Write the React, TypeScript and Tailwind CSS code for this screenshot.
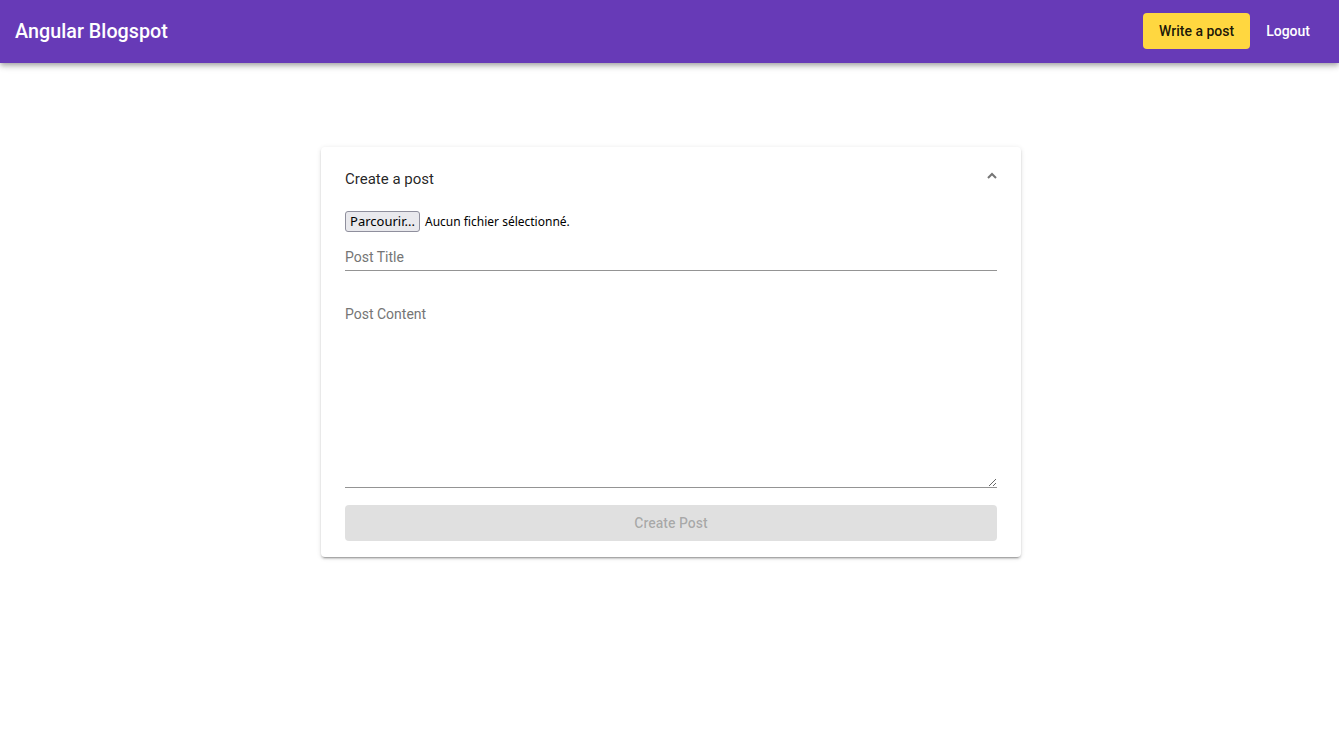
import React from 'react';

const font = { fontFamily: 'Roboto, "Helvetica Neue", sans-serif' };

const Toolbar: React.FC = () => (
  <header className="relative z-10 flex h-[63px] items-center justify-between bg-[#673ab7] pl-[15px] pr-[13px] text-white shadow-[0_2px_4px_-1px_rgba(0,0,0,0.2),0_4px_5px_0_rgba(0,0,0,0.14),0_1px_10px_0_rgba(0,0,0,0.12)]">
    <span className="text-[19.7px] font-medium tracking-[0.05px]">Angular Blogspot</span>
    <div className="-mt-px flex items-center">
      <button className="h-9 rounded-[4px] bg-[#ffd740] px-4 text-[14px] font-medium text-black/90">
        Write a post
      </button>
      <button className="h-9 px-4 text-[14px] font-medium text-white">Logout</button>
    </div>
  </header>
);

const CreatePost: React.FC = () => (
  <div className="w-[700px] rounded-[4px] bg-white shadow-[0_3px_1px_-2px_rgba(0,0,0,0.2),0_2px_2px_0_rgba(0,0,0,0.14),0_1px_5px_0_rgba(0,0,0,0.12)]">
    <div className="flex h-16 items-center justify-between px-6">
      <span className="text-[15px] text-black/[0.87]">Create a post</span>
      <svg width="14" height="14" viewBox="0 0 14 14" className="-mt-[6px] mr-[-2px]">
        <path d="M3 9 L7 5 L11 9" fill="none" stroke="#757575" strokeWidth="2" />
      </svg>
    </div>
    <div className="px-6 pb-4">
      <div className="flex h-[21px] items-center gap-[5px] text-[12px] text-black" style={{ fontFamily: '"Noto Sans", "DejaVu Sans", sans-serif' }}>
        <span className="flex h-[21px] w-[75px] items-center justify-center rounded-[3px] border border-[#8f8f9d] bg-[#e9e9ed] text-[13px] leading-none">
          Parcourir...
        </span>
        <span>Aucun fichier sélectionné.</span>
      </div>
      <input
        placeholder="Post Title"
        className="mt-3 block h-[27px] w-full border-b border-[#949494] bg-transparent text-[14px] text-black/[0.87] outline-none placeholder:text-[#757575]"
      />
      <textarea
        placeholder="Post Content"
        className="mt-[34px] block h-[183px] w-full border-b border-[#949494] bg-transparent pt-0 text-[14px] leading-[18px] text-black/[0.87] outline-none placeholder:text-[#757575]"
      />
      <button
        disabled
        className="mt-[17px] h-9 w-full rounded-[4px] bg-[#e0e0e0] text-[14px] font-medium text-black/[0.26]"
      >
        Create Post
      </button>
    </div>
  </div>
);

export default function App() {
  return (
    <div className="min-h-[747px] bg-white" style={font}>
      <Toolbar />
      <main className="flex justify-center pl-[3px] pt-[84px]">
        <CreatePost />
      </main>
    </div>
  );
}
